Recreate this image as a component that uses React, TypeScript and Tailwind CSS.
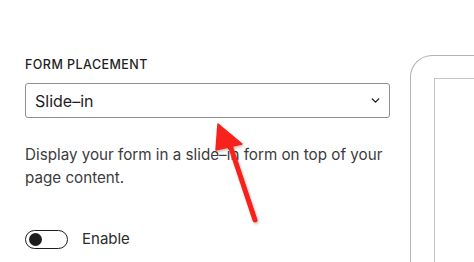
import React from "react";

export default function App() {
  return (
    <div className="relative w-[474px] h-[262px] overflow-hidden bg-white flex" style={{ fontFamily: "Inter, 'Liberation Sans', Arial, sans-serif" }}>
      <div className="w-[365px] ml-[25px] shrink-0 pt-[57px] flex flex-col">
        <div className="text-[12.5px] leading-[16px] font-medium tracking-[0.45px] text-[#1e1e1e] uppercase">Form Placement</div>
        <div className="mt-[10px] h-[35px] border border-[#8f8f8f] rounded-[3px] flex items-center justify-between pl-[9px] pr-[7px]">
          <span className="text-[16px] text-[#1e1e1e]">Slide–in</span>
          <svg width="13" height="13" viewBox="0 0 24 24" fill="none" stroke="#1e1e1e" strokeWidth="2.6" strokeLinecap="round" strokeLinejoin="round"><path d="M6 9l6 6 6-6" /></svg>
        </div>
        <p className="mt-[25px] text-[15.2px] leading-[23px] text-[#3c3c3c]">Display your form in a slide–in form on top of your page content.</p>
        <div className="mt-[39px] flex items-center gap-[14px]">
          <div className="w-[43px] h-[19px] rounded-full border-[1.5px] border-[#1e1e1e] flex items-center pl-[3px]">
            <div className="w-[13px] h-[13px] rounded-full bg-[#1e1e1e]" />
          </div>
          <span className="text-[15px] text-[#2c2c2c]">Enable</span>
        </div>
      </div>
      <div className="ml-[20px] mt-[55px] flex-1 border-l-[1.5px] border-t-[1.5px] border-[#b3b3b3] rounded-tl-[22px] pl-[23px] pt-[22px]">
        <div className="w-full h-full border-l border-t border-[#c4c4c4]" />
      </div>
      <svg className="absolute left-0 top-0" width="474" height="262" viewBox="0 0 474 262">
        <defs>
          <filter id="sh" x="-20%" y="-20%" width="140%" height="140%">
            <feDropShadow dx="1" dy="1.5" stdDeviation="1.2" floodColor="#000" floodOpacity="0.25" />
          </filter>
        </defs>
        <g filter="url(#sh)">
          <line x1="229" y1="142" x2="255" y2="220" stroke="#f8231b" strokeWidth="5" strokeLinecap="round" />
          <polygon points="218,124 216,150 242,144" fill="#f8231b" stroke="#f8231b" strokeWidth="1.5" strokeLinejoin="round" />
        </g>
      </svg>
    </div>
  );
}
